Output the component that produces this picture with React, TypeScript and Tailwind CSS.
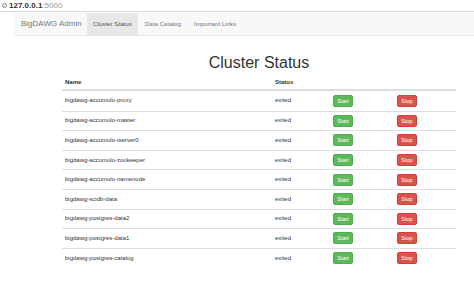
import React from "react";

const rows = [
  "bigdawg-accumulo-proxy",
  "bigdawg-accumulo-master",
  "bigdawg-accumulo-tserver0",
  "bigdawg-accumulo-zookeeper",
  "bigdawg-accumulo-namenode",
  "bigdawg-scidb-data",
  "bigdawg-postgres-data2",
  "bigdawg-postgres-data1",
  "bigdawg-postgres-catalog",
];

export default function App() {
  return (
    <div
      className="w-[474px] h-[292px] bg-white overflow-hidden text-[#333]"
      style={{ fontFamily: '"Liberation Sans", Arial, sans-serif' }}
    >
      {/* address bar */}
      <div className="h-[12px] flex items-center pl-[2px] text-[8px] leading-none border-b border-[#dcdcdc]">
        <span className="text-[#888] mr-[2px] w-[5px] h-[5px] rounded-full border border-[#888] flex items-center justify-center leading-none">
          <span className="text-[4px]">i</span>
        </span>
        <span className="text-[#333] font-semibold">127.0.0.1</span>
        <span className="text-[#999]">:5000</span>
      </div>
      {/* navbar */}
      <div className="ml-[14px] mt-[1px] h-[23px] bg-[#f8f8f8] border-b border-[#e7e7e7] flex items-stretch">
        <div className="pl-[7px] flex items-center text-[8px] text-[#777] w-[73px] whitespace-nowrap">
          BigDAWG Admin
        </div>
        <div className="px-[6px] flex items-center bg-[#e7e7e7] text-[#555] text-[6.2px] whitespace-nowrap">
          Cluster Status
        </div>
        <div className="px-[7px] flex items-center text-[#777] text-[6.2px] whitespace-nowrap">
          Data Catalog
        </div>
        <div className="px-[6px] flex items-center text-[#777] text-[6.2px] whitespace-nowrap">
          Important Links
        </div>
      </div>
      {/* content */}
      <div className="ml-[62px] w-[394px]">
        <div className="mt-[18px] text-center text-[16px] leading-[18px] text-[#333]">
          Cluster Status
        </div>
        <div className="mt-[3px] h-[16px] pt-[1px] flex items-center text-[6px] font-bold border-b-2 border-[#ddd]">
          <div className="w-[210px] pl-[3px]">Name</div>
          <div className="w-[58px] pl-[3px]">Status</div>
          <div className="w-[64px]"></div>
          <div className="w-[62px]"></div>
        </div>
        {rows.map((name, i) => (
          <div
            key={name}
            className={`h-[19.6px] flex items-center text-[6px] ${i > 0 ? "border-t border-[#ddd]" : ""}`}
          >
            <div className="w-[210px] pl-[3px]">{name}</div>
            <div className="w-[58px] pl-[3px]">exited</div>
            <div className="w-[64px] pl-[3px]">
              <div className="w-[20px] h-[12px] bg-[#5cb85c] border border-[#4cae4c] rounded-[2px] text-white text-[5.5px] flex items-center justify-center">
                Start
              </div>
            </div>
            <div className="w-[62px] pl-[3px]">
              <div className="w-[20px] h-[12px] bg-[#d9534f] border border-[#d43f3a] rounded-[2px] text-white text-[5.5px] flex items-center justify-center">
                Stop
              </div>
            </div>
          </div>
        ))}
      </div>
    </div>
  );
}
